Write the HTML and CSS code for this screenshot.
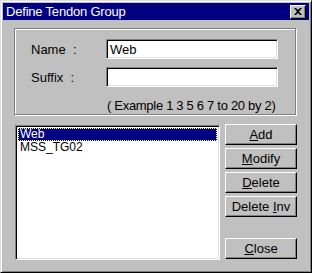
FILE: index.html
```html
<!DOCTYPE html>
<html>
    <head>
        <link rel="stylesheet" href="styles.css">
    </head>
    <body>
        <div class="window">
            <div class="titlebar">
                <span class="title">Define Tendon Group</span>
                <span class="closebox">
                    <svg width="8" height="7" viewBox="0 0 8 7">
                        <path d="M0 0h2l2 2 2-2h2L5 3.5 8 7H6L4 5 2 7H0l3-3.5z" fill="#000"/>
                    </svg>
                </span>
            </div>
            <div class="group">
                <label class="lbl">Name &nbsp;:</label>
                <div class="ipt">Web</div>
                <label class="lbl">Suffix &nbsp;:</label>
                <div class="ipt"></div>
                <span class="hint">( Example 1 3 5 6 7 to 20 by 2)</span>
            </div>
            <div class="lower">
                <div class="listbox">
                    <div class="item sel">Web</div>
                    <div class="item">MSS_TG02</div>
                </div>
                <div class="buttons">
                    <button><u>A</u>dd</button>
                    <button><u>M</u>odify</button>
                    <button><u>D</u>elete</button>
                    <button>Delete <u>I</u>nv</button>
                    <button class="close"><u>C</u>lose</button>
                </div>
            </div>
        </div>
    </body>
</html>
```
FILE: styles.css
```css
body {
    margin: 0;
    font-family: "Liberation Sans", Arial, sans-serif;
    font-size: 12px;
    background-color: #c0c0c0;
}

.window {
    box-sizing: border-box;
    width: 312px;
    height: 273px;
    background-color: #c0c0c0;
    border-top: 1px solid #dfdfdf;
    border-left: 1px solid #dfdfdf;
    border-right: 1px solid #000;
    border-bottom: 1px solid #000;
    box-shadow: inset 1px 1px 0 #fff, inset -1px -1px 0 #808080;
    padding: 2px;
}

.titlebar {
    height: 17px;
    background-color: #000080;
    color: #fff;
    display: flex;
    align-items: center;
    justify-content: space-between;
    padding: 0 3px 0 3px;
}
.title {
    font-size: 13px;
    letter-spacing: -0.2px;
}
.closebox {
    width: 16px;
    height: 14px;
    box-sizing: border-box;
    background-color: #c0c0c0;
    border-top: 1px solid #fff;
    border-left: 1px solid #fff;
    border-right: 1px solid #000;
    border-bottom: 1px solid #000;
    box-shadow: inset -1px -1px 0 #808080;
    display: flex;
    align-items: center;
    justify-content: center;
}

.group {
    box-sizing: border-box;
    margin: 8px 0 0 11px;
    width: 282px;
    height: 87px;
    border: 1px solid #808080;
    box-shadow: inset 1px 1px 0 #fff, 1px 1px 0 #fff;
    padding: 10px 0 0 16px;
    display: grid;
    grid-template-columns: 75px 172px;
    grid-auto-rows: 20px;
    row-gap: 8px;
    align-items: center;
}
.lbl {
    font-size: 13px;
    color: #000;
}
.ipt {
    box-sizing: border-box;
    height: 20px;
    background-color: #fff;
    border-top: 1px solid #808080;
    border-left: 1px solid #808080;
    border-right: 1px solid #fff;
    border-bottom: 1px solid #fff;
    box-shadow: inset 1px 1px 0 #000, inset -1px -1px 0 #dfdfdf;
    padding: 2px 3px;
    font-size: 13px;
    line-height: 15px;
}
.hint {
    grid-column: 2;
    font-size: 13px;
    margin-left: 1px;
    letter-spacing: -0.3px;
}

.lower {
    display: flex;
    margin: 10px 0 0 12px;
}
.listbox {
    box-sizing: border-box;
    width: 205px;
    height: 135px;
    background-color: #fff;
    border-top: 1px solid #808080;
    border-left: 1px solid #808080;
    border-right: 1px solid #fff;
    border-bottom: 1px solid #fff;
    box-shadow: inset 1px 1px 0 #000, inset -1px -1px 0 #dfdfdf;
    padding: 2px;
}
.item {
    height: 13px;
    line-height: 13px;
    padding-left: 2px;
    font-size: 12px;
    color: #000;
}
.sel {
    background-color: #000080;
    color: #fff;
    outline: 1px dotted #fff;
    outline-offset: -1px;
}

.buttons {
    display: flex;
    flex-direction: column;
    gap: 3px;
    margin-left: 5px;
    margin-top: -1px;
}
button {
    box-sizing: border-box;
    width: 72px;
    height: 21px;
    padding: 0;
    background-color: #c0c0c0;
    border-top: 1px solid #fff;
    border-left: 1px solid #fff;
    border-right: 1px solid #000;
    border-bottom: 1px solid #000;
    box-shadow: inset -1px -1px 0 #808080;
    font-family: "Liberation Sans", Arial, sans-serif;
    font-size: 13px;
    color: #000;
}
.close {
    margin-top: 18px;
}
```
